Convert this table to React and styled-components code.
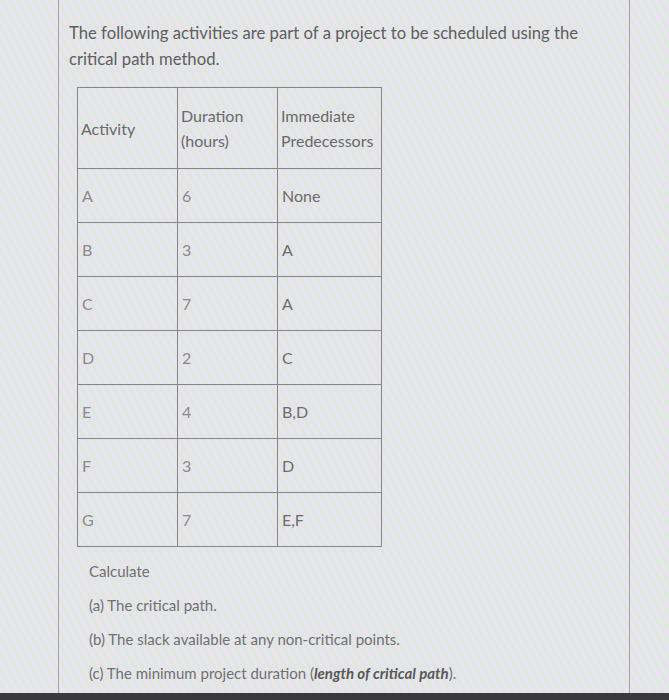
import React from "react";
import styled, { createGlobalStyle } from "styled-components";

const GlobalStyle = createGlobalStyle`
  html, body {
    margin: 0;
    padding: 0;
  }
  body {
    font-family: Lato, "Open Sans", "Liberation Sans", sans-serif;
    background: #e6e1ec;
  }
`;

const rows = [
  { activity: "A", duration: "6", pred: "None" },
  { activity: "B", duration: "3", pred: "A" },
  { activity: "C", duration: "7", pred: "A" },
  { activity: "D", duration: "2", pred: "C" },
  { activity: "E", duration: "4", pred: "B,D" },
  { activity: "F", duration: "3", pred: "D" },
  { activity: "G", duration: "7", pred: "E,F" },
];

export default function App() {
  return (
    <>
      <GlobalStyle />
      <Page>
        <Sheet>
          <Intro>
            The following activities are part of a project to be scheduled using the
            critical path method.
          </Intro>
          <Table>
            <thead>
              <tr>
                <HeadCell $w={100}>Activity</HeadCell>
                <HeadCell $w={100}>
                  Duration
                  <br />
                  (hours)
                </HeadCell>
                <HeadCell $w={104}>
                  Immediate
                  <br />
                  Predecessors
                </HeadCell>
              </tr>
            </thead>
            <tbody>
              {rows.map((r) => (
                <tr key={r.activity}>
                  <Cell $light>{r.activity}</Cell>
                  <Cell $light>{r.duration}</Cell>
                  <Cell>{r.pred}</Cell>
                </tr>
              ))}
            </tbody>
          </Table>
          <Questions>
            <Line>Calculate</Line>
            <Line>(a) The critical path.</Line>
            <Line>(b) The slack available at any non-critical points.</Line>
            <Line>
              (c) The minimum project duration (<em>length of critical path</em>).
            </Line>
          </Questions>
        </Sheet>
        <BottomBar />
      </Page>
    </>
  );
}

const Page = styled.div`
  height: 700px;
  overflow: hidden;
  display: flex;
  flex-direction: column;
  background:
    repeating-linear-gradient(
      62deg,
      #dcebd9 0px,
      #dcebd9 3px,
      #ebe2f1 3px,
      #ebe2f1 7px
    ),
    #e6e1ec;
`;

const Sheet = styled.div`
  flex: 1;
  margin-left: 58px;
  width: 572px;
  border-left: 1px solid #a6a4aa;
  border-right: 1px solid #a6a4aa;
  padding-top: 20px;
  box-sizing: border-box;
`;

const Intro = styled.p`
  margin: 0 0 0 10px;
  width: 520px;
  font-size: 16.7px;
  line-height: 26px;
  color: #5e5e61;
`;

const Table = styled.table`
  margin: 15px 0 0 18px;
  border-collapse: collapse;
  border: 1px solid #86868a;
  color: #7a7a7d;
  font-size: 16px;
`;

const HeadCell = styled.th`
  width: ${(p) => p.$w}px;
  height: 81px;
  padding: 0 3px;
  box-sizing: border-box;
  border: 1px solid #86868a;
  text-align: left;
  font-weight: 400;
  line-height: 25px;
  color: #69696c;
`;

const Cell = styled.td`
  height: 54px;
  padding: 0 4px;
  box-sizing: border-box;
  border: 1px solid #86868a;
  color: ${(p) => (p.$light ? "#8a8a8e" : "#6c6c6f")};
`;

const Questions = styled.div`
  margin: 14px 0 0 30px;
  display: flex;
  flex-direction: column;
  gap: 14px;
`;

const Line = styled.div`
  font-size: 15px;
  line-height: 20px;
  color: #707073;

  em {
    font-weight: 700;
    color: #58585b;
  }
`;

const BottomBar = styled.div`
  height: 7px;
  background: #3a3a3c;
`;
